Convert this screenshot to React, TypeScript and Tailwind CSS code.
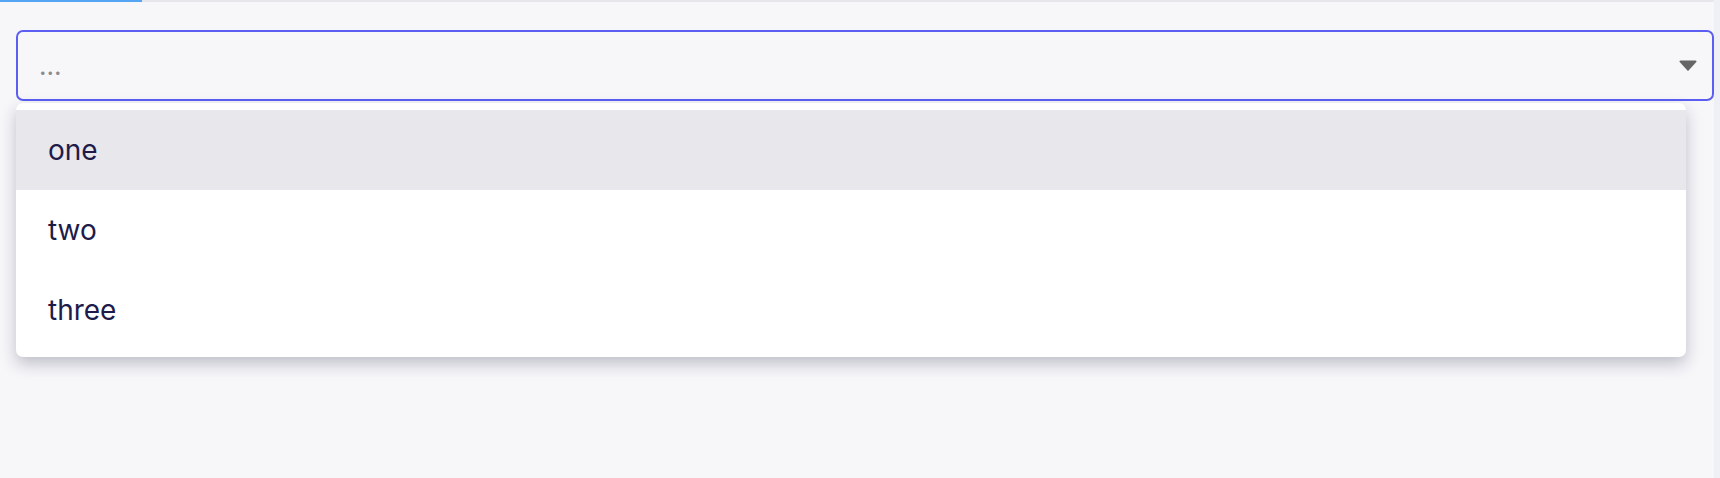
import { useState } from "react";

const options = ["one", "two", "three"];

function Caret() {
  return (
    <svg width="18" height="11" viewBox="0 0 18 11" className="shrink-0">
      <path
        d="M1.5 0.5h15a1 1 0 0 1 .8 1.6l-7.5 8.2a1 1 0 0 1-1.6 0L.7 2.1A1 1 0 0 1 1.5.5z"
        fill="#666666"
      />
    </svg>
  );
}

export default function App() {
  const [active] = useState(0);

  return (
    <div
      className="flex h-[478px] w-full bg-[#f7f7fa]"
      style={{ fontFamily: "Inter, 'Noto Sans', sans-serif" }}
    >
      <div className="flex flex-1 flex-col">
        {/* Progress bar */}
        <div className="flex h-[2px] bg-[#e6e6eb]">
          <div className="w-[142px] bg-[#55a5f5]" />
        </div>

        <div className="pl-4 pt-[28px]">
          <div className="relative">
            <button
              type="button"
              className="flex h-[71px] w-full items-center justify-between rounded-[7px] border-2 border-[#5c5ef2] bg-[#f7f7fa] pl-[21px] pr-[15px] text-left"
            >
              <span className="text-[26px] leading-none text-[#8a8a8f]">...</span>
              <Caret />
            </button>

            {/* Menu */}
            <div className="absolute left-0 top-[73px] w-[1670px] rounded-[7px] bg-white py-[7px] shadow-[0_7px_16px_rgba(30,30,60,0.26)]">
              {options.map((o, i) => (
                <div
                  key={o}
                  className={[
                    "flex h-[80px] items-center px-8 text-[28px] text-[#1e1b4b]",
                    i === active ? "bg-[#e8e7ec]" : "bg-white",
                  ].join(" ")}
                >
                  {o}
                </div>
              ))}
            </div>
          </div>
        </div>
      </div>

      {/* Scrollbar strip */}
      <div className="w-[6px] bg-[#eef0f5]" />
    </div>
  );
}
